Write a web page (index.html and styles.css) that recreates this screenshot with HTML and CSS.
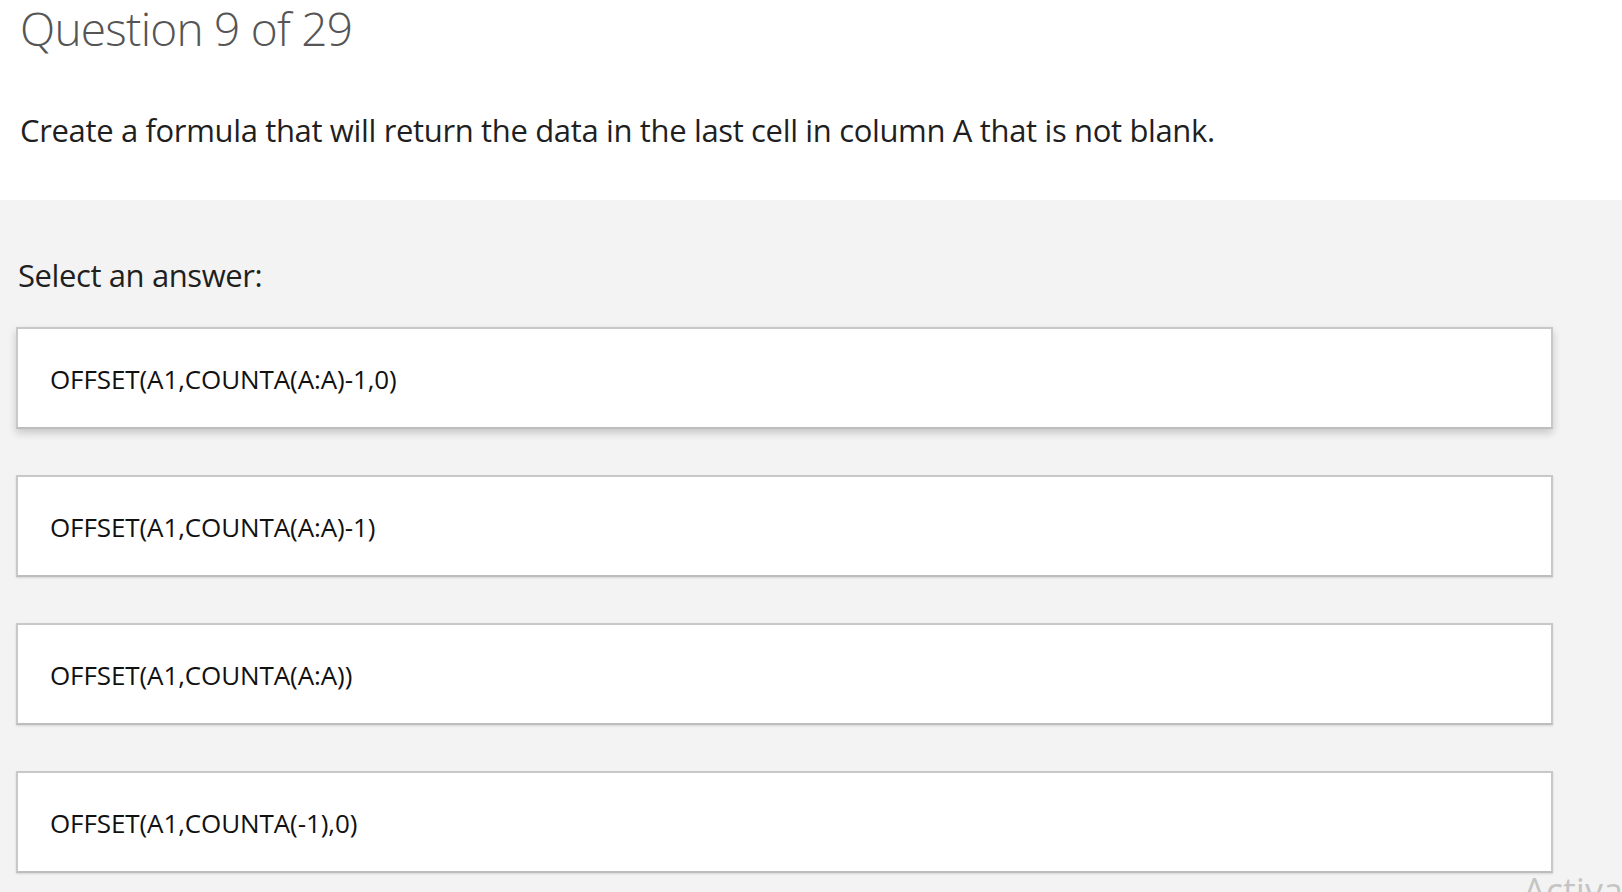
FILE: index.html
```html
<!DOCTYPE html>
<html lang="en">
<head>
    <meta charset="UTF-8">
    <meta name="viewport" content="width=device-width, initial-scale=1.0">
    <title>Question 9 of 29</title>
    <link rel="stylesheet" href="styles.css">
</head>
<body>

<div class="question">
    <h1 class="counter">Question 9 of 29</h1>
    <p class="prompt">Create a formula that will return the data in the last cell in column A that is not blank.</p>
</div>

<div class="answers">
    <p class="label">Select an answer:</p>
    <div class="options">
        <button class="option focused">OFFSET(A1,COUNTA(A:A)-1,0)</button>
        <button class="option">OFFSET(A1,COUNTA(A:A)-1)</button>
        <button class="option">OFFSET(A1,COUNTA(A:A))</button>
        <button class="option">OFFSET(A1,COUNTA(-1),0)</button>
    </div>
</div>

<div class="watermark">Activate Windows</div>

</body>
</html>
```

FILE: styles.css
```css
html, body {
    height: 100%;
}
body {
    margin: 0;
    overflow: hidden;
    position: relative;
    font-family: "Open Sans", "Noto Sans", sans-serif;
    background-color: #f3f3f3;
    color: #1f1f1f;
}
.question {
    background-color: #fff;
    padding: 0 20px 50px 20px;
}
.counter {
    margin: 0;
    font-size: 46px;
    line-height: 56px;
    font-weight: 300;
    letter-spacing: -0.75px;
    color: #555;
}
.prompt {
    margin: 54px 0 0 0;
    font-size: 31px;
    line-height: 40px;
    letter-spacing: -0.35px;
}
.answers {
    padding: 55px 69px 0 16px;
}
.label {
    margin: 0 0 32px 2px;
    font-size: 31px;
    line-height: 40px;
    letter-spacing: -0.4px;
}
.options {
    display: flex;
    flex-direction: column;
    gap: 46px;
}
.option {
    display: flex;
    align-items: center;
    height: 102px;
    padding: 2px 0 0 32px;
    box-sizing: border-box;
    font-family: inherit;
    font-size: 26px;
    letter-spacing: -0.1px;
    color: #111;
    text-align: left;
    background-color: #fff;
    border: 2px solid #c8c8c8;
    border-bottom-color: #bdbdbd;
    box-shadow: 0 1px 2px rgba(0, 0, 0, 0.12);
    cursor: pointer;
}
.option.focused {
    box-shadow: 0 4px 8px rgba(0, 0, 0, 0.18);
}
.watermark {
    position: absolute;
    left: 1523px;
    top: 866px;
    font-size: 36px;
    color: rgba(150, 150, 150, 0.5);
    white-space: nowrap;
}
```
